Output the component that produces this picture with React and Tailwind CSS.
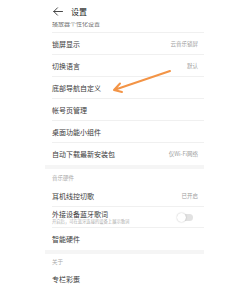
import React from "react";

const font = { fontFamily: '"Noto Sans CJK SC", "Noto Sans", sans-serif' };

function Row({ label, value, border = true, height = "h-[22px]" }) {
  return (
    <div
      className={`ml-[7px] pr-[6px] flex items-center justify-between ${height} ${
        border ? "border-b border-[#f0f0f0]" : ""
      }`}
    >
      <span className="text-[7px] leading-[8px] text-[#3a3a3a]">{label}</span>
      {value && <span className="text-[5.5px] leading-[6px] text-[#a0a0a0]">{value}</span>}
    </div>
  );
}

function App() {
  return (
    <div className="relative w-[250px] h-[295px] bg-white overflow-hidden" style={font}>
      <div className="ml-[45px] w-[159px]">
        <div className="h-[22px] flex items-center pl-[8px]">
          <svg width="10" height="9" viewBox="0 0 10 9" fill="none" stroke="#333" strokeWidth="0.9" strokeLinecap="round" strokeLinejoin="round">
            <path d="M9.5 4.5H0.8M4.5 0.8L0.8 4.5L4.5 8.2" />
          </svg>
          <span className="ml-[8px] text-[8px] leading-[9px] text-[#222]">设置</span>
        </div>

        <div className="ml-[7px] h-[11px] overflow-hidden border-b border-[#f0f0f0]">
          <div className="-mt-[1px] text-[6px] leading-[6px] text-[#777]">播放器个性化设置</div>
        </div>

        <Row label="锁屏显示" value="云音乐锁屏" />
        <Row label="切换语言" value="默认" />
        <Row label="底部导航自定义" />
        <Row label="帐号页管理" />
        <Row label="桌面功能小组件" />
        <Row label="自动下载最新安装包" value="仅Wi-Fi网络" border={false} />

        <div className="h-[4px] bg-[#f5f5f5]" />

        <div className="h-[17px] flex items-center pl-[7px]">
          <span className="text-[5.5px] leading-[6px] text-[#aaa]">音乐硬件</span>
        </div>
        <Row label="耳机线控切歌" value="已开启" height="h-[21px]" />
        <div className="ml-[7px] pr-[11px] h-[21px] flex items-center justify-between border-b border-[#f0f0f0]">
          <div className="flex flex-col">
            <span className="text-[7px] leading-[8px] text-[#3a3a3a]">外接设备蓝牙歌词</span>
            <span className="mt-[1px] text-[4.3px] leading-[5px] text-[#aaa]">开启后，可在蓝牙连接的设备上展示歌词</span>
          </div>
          <div className="relative w-[15px] h-[7px] rounded-full bg-[#e2e2e2]">
            <div className="absolute -left-[1px] -top-[1px] w-[9px] h-[9px] rounded-full bg-white shadow-[0_0_1.5px_rgba(0,0,0,0.3)]" />
          </div>
        </div>
        <Row label="智能硬件" border={false} />

        <div className="h-[4px] bg-[#f5f5f5]" />

        <div className="h-[16px] flex items-center pl-[7px]">
          <span className="text-[5.5px] leading-[6px] text-[#aaa]">关于</span>
        </div>
        <Row label="专栏彩蛋" border={false} height="h-[18px]" />
      </div>

      <svg className="absolute left-0 top-0" width="250" height="295" viewBox="0 0 250 295" fill="none">
        <path
          d="M170 71L114 90M114 90L120 83.5M114 90L122 92"
          stroke="#f39446"
          strokeWidth="2"
          strokeLinecap="round"
          strokeLinejoin="round"
        />
      </svg>
    </div>
  );
}

export default App;
